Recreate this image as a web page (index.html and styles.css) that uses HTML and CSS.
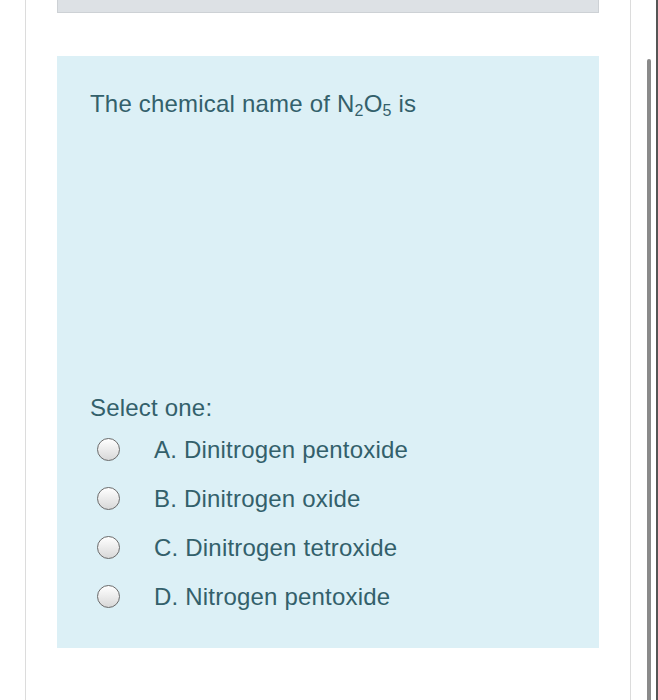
FILE: index.html
```html
<!DOCTYPE html>
<html>
<head>
<meta charset="utf-8">
<link rel="stylesheet" href="styles.css">
</head>
<body>
<div class="screen">
  <div class="page">
    <div class="prev-box"></div>
    <div class="question">
      <p class="qtext">The chemical name of N<sub>2</sub>O<sub>5</sub> is</p>
      <div class="answer">
        <div class="prompt">Select one:</div>
        <label class="opt"><span class="radio"></span><span class="label">A. Dinitrogen pentoxide</span></label>
        <label class="opt"><span class="radio"></span><span class="label">B. Dinitrogen oxide</span></label>
        <label class="opt"><span class="radio"></span><span class="label">C. Dinitrogen tetroxide</span></label>
        <label class="opt"><span class="radio"></span><span class="label">D. Nitrogen pentoxide</span></label>
      </div>
    </div>
  </div>
  <div class="scroll"><div class="thumb"></div></div>
</div>
</body>
</html>
```
FILE: styles.css
```css
html, body {
  margin: 0;
  padding: 0;
  background: #ffffff;
}
body {
  font-family: "Liberation Sans", Arial, sans-serif;
  color: #33606b;
}
.screen {
  display: flex;
  height: 700px;
  overflow: hidden;
  border-right: 2px solid #555;
  box-sizing: border-box;
  width: 658px;
}
.page {
  margin-left: 25px;
  width: 606px;
  border-left: 1px solid #dcdcdc;
  border-right: 1px solid #dcdcdc;
  padding: 0 31px;
  box-sizing: border-box;
}
.prev-box {
  height: 12px;
  background: #dde1e5;
  border: 1px solid #cdd1d5;
  border-top: none;
}
.question {
  margin-top: 43px;
  background: #dcf0f6;
  padding: 34px 33px 27px 33px;
  height: 592px;
  box-sizing: border-box;
}
.qtext {
  margin: 0;
  font-size: 24px;
  letter-spacing: 0.2px;
  line-height: 28px;
  height: 304px;
}
.qtext sub {
  font-size: 16px;
  vertical-align: -4px;
  line-height: 0;
}
.prompt {
  font-size: 24px;
  letter-spacing: 0.2px;
  line-height: 28px;
  height: 31px;
}
.opt {
  display: flex;
  align-items: center;
  height: 49px;
}
.radio {
  width: 21px;
  height: 21px;
  border-radius: 50%;
  border: 1.5px solid #6a6a6a;
  background: linear-gradient(#ffffff, #d8d8d8);
  margin-left: 7px;
  margin-right: 34px;
  flex: none;
}
.label {
  font-size: 24px;
  letter-spacing: 0.2px;
  line-height: 28px;
}
.scroll {
  flex: 1;
  position: relative;
}
.thumb {
  position: absolute;
  left: 16px;
  top: 59px;
  width: 4px;
  height: 660px;
  background: #8a8a8a;
  border-radius: 2px;
}
```
